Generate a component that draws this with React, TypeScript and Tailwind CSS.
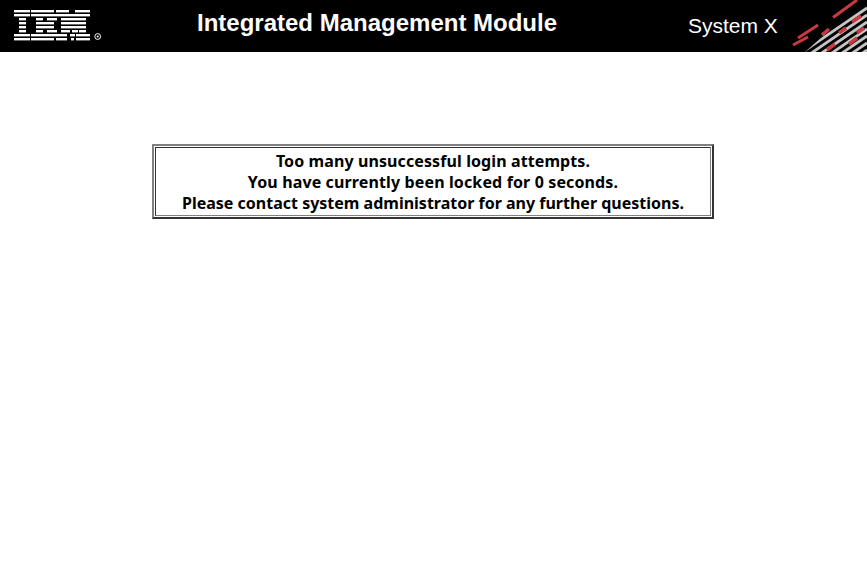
// IMM login locked page
function IbmLogo() {
  const rows = [
    [[0, 16], [17, 40], [42, 55], [61, 76]],
    [[0, 16], [17, 42], [42, 58], [58, 76]],
    [[5, 12], [22, 29], [33, 43], [47, 61], [61, 72]],
    [[5, 12], [22, 40], [47, 72]],
    [[5, 12], [22, 40], [47, 72]],
    [[5, 12], [22, 29], [33, 43], [47, 56], [58, 64], [65, 72]],
    [[0, 16], [17, 42], [42, 53], [56, 61], [62, 76]],
    [[0, 16], [17, 40], [42, 53], [57, 60], [62, 76]],
  ];
  return (
    <svg width="90" height="34" viewBox="0 0 90 34" className="block">
      {rows.map((row, i) =>
        row.map(([a, b], j) => (
          <rect key={`${i}-${j}`} x={a} y={i * 4} width={b - a} height="2.4" fill="#fff" />
        ))
      )}
      <circle cx="83.7" cy="26.5" r="2.9" fill="none" stroke="#fff" strokeWidth="1" />
      <circle cx="83.7" cy="26.5" r="1" fill="#fff" />
    </svg>
  );
}

function Stripes() {
  const gray = [8, 15, 22, 29, 36, 43, 50];
  // short red pieces that sit on top of the gray stripes
  const red = [
    [61, 22, 70, 16],
    [48, 33, 55, 28],
    [66, 33, 73, 28],
    [58, 44, 66, 38],
    [31, 35, 38, 29],
    [36, 50, 44, 44],
  ];
  return (
    <svg width="76" height="52" viewBox="0 0 76 52" className="block">
      <defs>
        <clipPath id="stripe-clip">
          <polygon points="14,52 57,14 76,0 76,52" />
        </clipPath>
      </defs>
      <g clipPath="url(#stripe-clip)">
        {gray.map((c) => (
          <line key={c} x1="0" y1={c + 52} x2="76" y2={c} stroke="#c4c4c4" strokeWidth="2.8" />
        ))}
      </g>
      <line x1="7" y1="38" x2="27" y2="25" stroke="#c93a3f" strokeWidth="3" />
      <line x1="2" y1="45" x2="17" y2="37" stroke="#c93a3f" strokeWidth="3" />
      <line x1="42" y1="17.5" x2="66" y2="0" stroke="#c93a3f" strokeWidth="3" />
      {red.map(([x1, y1, x2, y2], i) => (
        <line key={i} x1={x1} y1={y1} x2={x2} y2={y2} stroke="#c93a3f" strokeWidth="3.5" />
      ))}
    </svg>
  );
}

export default function App() {
  return (
    <div className="min-h-[584px] bg-white">
      <div className="flex h-[52px] items-start overflow-hidden bg-black font-['Liberation_Sans',sans-serif] text-white">
        <div className="ml-[14px] mt-[10px] w-[183px] shrink-0">
          <IbmLogo />
        </div>
        <div className="mt-[9px] w-[491px] shrink-0 text-[24px] font-bold leading-[28px]">Integrated Management Module</div>
        <div className="mt-[13px] w-[103px] shrink-0 text-[21px] leading-[26px]">System X</div>
        <div className="shrink-0">
          <Stripes />
        </div>
      </div>
      <div className="pl-[152px] pt-[92px]">
        <div className="w-[562px] border-2 border-t-[#808080] border-l-[#808080] border-r-[#333] border-b-[#333] p-[1px]">
          <div className="border border-t-[#333] border-l-[#333] border-r-[#808080] border-b-[#808080] pb-[1px] pt-[3px] text-center font-['Noto_Sans',sans-serif] text-[16px] font-bold leading-[21px] text-black">
            <div className="tracking-[0.1px]">Too many unsuccessful login attempts.</div>
            <div className="tracking-[0.13px]">You have currently been locked for 0 seconds.</div>
            <div>Please contact system administrator for any further questions.</div>
          </div>
        </div>
      </div>
    </div>
  );
}
